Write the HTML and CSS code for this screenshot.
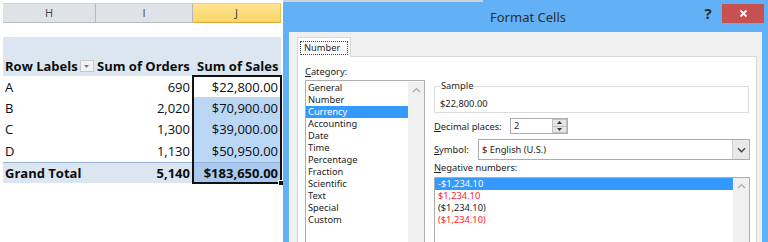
FILE: index.html
```html
<!DOCTYPE html>
<html>
<head>
<meta charset="utf-8">
<link rel="stylesheet" href="styles.css">
</head>
<body>
<div class="screen">
  <div class="sheet">
    <div class="colheads">
      <div class="ch">H</div>
      <div class="ch">I</div>
      <div class="ch ch-sel">J</div>
    </div>
    <div class="gap-row"></div>
    <div class="pivot">
      <div class="prow pblank"><div class="c"></div><div class="c"></div><div class="c"></div></div>
      <div class="prow phead">
        <div class="c lbl">Row Labels<span class="filter"><svg width="5" height="3" viewBox="0 0 5 3"><path d="M0 0H5L2.5 3Z" fill="#7a7a7a"/></svg></span></div>
        <div class="c hd">Sum of Orders</div>
        <div class="c hd hd-j">Sum of Sales</div>
      </div>
      <div class="prow pdata"><div class="c lbl">A</div><div class="c num">690</div><div class="c num">$22,800.00</div></div>
      <div class="prow pdata"><div class="c lbl">B</div><div class="c num">2,020</div><div class="c num selfill">$70,900.00</div></div>
      <div class="prow pdata"><div class="c lbl">C</div><div class="c num">1,300</div><div class="c num selfill">$39,000.00</div></div>
      <div class="prow pdata"><div class="c lbl">D</div><div class="c num">1,130</div><div class="c num selfill">$50,950.00</div></div>
      <div class="prow ptotal"><div class="c lbl">Grand Total</div><div class="c num">5,140</div><div class="c num selfill-total">$183,650.00</div></div>
      <div class="selbox"><span class="handle"></span></div>
    </div>
  </div>

  <div class="dialog">
    <div class="titlebar">
      <div class="title">Format Cells</div>
      <div class="help">?</div>
      <div class="close"><svg width="9" height="9" viewBox="0 0 9 9"><path d="M1.5 1.5L7.5 7.5M7.5 1.5L1.5 7.5" stroke="#fff" stroke-width="1.8"/></svg></div>
    </div>
    <div class="client">
      <div class="tabs"><div class="tab"><span class="focus">Number</span></div></div>
      <div class="panel">
        <div class="leftcol">
          <div class="flabel"><u>C</u>ategory:</div>
          <div class="listbox catlist">
            <div class="items">
              <div class="it">General</div>
              <div class="it">Number</div>
              <div class="it sel">Currency</div>
              <div class="it">Accounting</div>
              <div class="it">Date</div>
              <div class="it">Time</div>
              <div class="it">Percentage</div>
              <div class="it">Fraction</div>
              <div class="it">Scientific</div>
              <div class="it">Text</div>
              <div class="it">Special</div>
              <div class="it">Custom</div>
            </div>
            <div class="sbar"><svg width="9" height="6" viewBox="0 0 9 6"><path d="M1 5L4.5 1.5L8 5" fill="none" stroke="#a8a8a8" stroke-width="1.2"/></svg></div>
          </div>
        </div>
        <div class="rightcol">
          <fieldset class="sample">
            <legend>Sample</legend>
            <div class="sampleval">$22,800.00</div>
          </fieldset>
          <div class="frow decrow">
            <div class="rlabel dl"><u>D</u>ecimal places:</div>
            <div class="spin">
              <div class="spinval">2</div>
              <div class="spinbtns">
                <div class="sb"><svg width="5" height="3" viewBox="0 0 5 3"><path d="M0 3H5L2.5 0Z" fill="#333"/></svg></div>
                <div class="sb"><svg width="5" height="3" viewBox="0 0 5 3"><path d="M0 0H5L2.5 3Z" fill="#333"/></svg></div>
              </div>
            </div>
          </div>
          <div class="frow symrow">
            <div class="rlabel sl"><u>S</u>ymbol:</div>
            <div class="combo">
              <div class="comboval">$ English (U.S.)</div>
              <div class="combobtn"><svg width="9" height="6" viewBox="0 0 9 6"><path d="M1 1.2L4.5 4.7L8 1.2" fill="none" stroke="#444" stroke-width="1.4"/></svg></div>
            </div>
          </div>
          <div class="flabel neglabel"><u>N</u>egative numbers:</div>
          <div class="listbox neglist">
            <div class="items">
              <div class="it sel">-$1,234.10</div>
              <div class="it red">$1,234.10</div>
              <div class="it">($1,234.10)</div>
              <div class="it red">($1,234.10)</div>
            </div>
            <div class="sbar"><svg width="9" height="6" viewBox="0 0 9 6"><path d="M1 5L4.5 1.5L8 5" fill="none" stroke="#a8a8a8" stroke-width="1.2"/></svg></div>
          </div>
        </div>
      </div>
    </div>
  </div>
</div>
</body>
</html>
```
FILE: styles.css
```css
* { box-sizing: border-box; }
html, body { margin: 0; padding: 0; }
body { width: 768px; height: 242px; overflow: hidden; background: #fff; }

.screen { display: flex; height: 242px; overflow: hidden; }

/* ---------- spreadsheet ---------- */
.sheet {
  width: 283px;
  flex: none;
  padding: 3px 0 0 3px;
  font-family: "Open Sans", "Noto Sans", sans-serif;
  color: #0d0d0d;
}
.colheads {
  display: grid;
  grid-template-columns: 93px 97px 88px;
  height: 20px;
}
.ch {
  background: #dfe3e8;
  border-top: 1px solid #d0d4d9;
  border-bottom: 1px solid #b9bdc2;
  border-right: 1px solid #b4b8bd;
  font-size: 11px;
  line-height: 18px;
  text-align: center;
  color: #444;
}
.ch-sel {
  background: linear-gradient(#ffe38d, #f9d66a);
  border-bottom: 1px solid #e0a83a;
  border-right: 1px solid #e9c25a;
  color: #333;
}
.gap-row { height: 14px; }

.pivot { position: relative; width: 278px; }
.prow {
  display: grid;
  grid-template-columns: 93px 97px 88px;
  font-size: 13px;
}
.c {
  display: flex;
  align-items: center;
  white-space: nowrap;
}
.lbl { padding-left: 2px; }
.hd { padding-left: 1px; }
.hd-j { padding-left: 4px; }
.num { justify-content: flex-end; padding-right: 3px; }
.pblank { height: 19px; background: #dce6f1; }
.phead { height: 20px; background: #dce6f1; font-weight: 700; }
.pdata { height: 21.4px; }
.ptotal {
  height: 21.4px;
  background: #dce6f1;
  border-top: 1px solid #95b3d7;
  font-weight: 700;
}
.selfill { background: #bad7f6; }
.selfill-total { background: #a9c9ef; }

.filter {
  display: inline-flex;
  align-items: center;
  justify-content: center;
  width: 14px;
  height: 12px;
  margin-left: 2px;
  background: #f2f2f2;
  border: 1px solid #c8c8c8;
}

.selbox {
  position: absolute;
  left: 189px;
  top: 38px;
  width: 90px;
  height: 109px;
  border: 2px solid #111;
  pointer-events: none;
}
.handle {
  position: absolute;
  right: -4px;
  bottom: -4px;
  width: 6px;
  height: 6px;
  background: #111;
  border: 1px solid #fff;
}

/* ---------- dialog ---------- */
.dialog {
  width: 485px;
  flex: none;
  background: #62b1f6;
  padding: 0 6px;
  display: flex;
  flex-direction: column;
  font-family: "Noto Sans", "Open Sans", sans-serif;
  color: #1a1a1a;
  position: relative;
}
.dialog::before {
  content: "";
  position: absolute;
  left: 0;
  top: 0;
  width: 200px;
  height: 2px;
  background: #cfd3d8;
}
.titlebar {
  height: 32px;
  flex: none;
  display: flex;
  align-items: flex-start;
}
.title {
  flex: 1;
  text-align: center;
  padding-left: 66px;
  font-size: 13px;
  line-height: 34px;
  color: #2e2e2e;
}
.help {
  width: 14px;
  margin-right: 7px;
  font-size: 15px;
  font-weight: 700;
  line-height: 26px;
  color: #2a2a2a;
  text-align: center;
}
.close {
  width: 42px;
  height: 19px;
  margin-top: 4px;
  margin-right: -2px;
  background: #c75050;
  display: flex;
  align-items: center;
  justify-content: center;
}

.client {
  flex: 1;
  min-height: 0;
  background: #f0f0f0;
  padding: 5px 5px 0 8px;
  display: flex;
  flex-direction: column;
  font-size: 9.3px;
}
.tabs { display: flex; height: 20px; flex: none; position: relative; z-index: 1; }
.tab {
  width: 54px;
  height: 20px;
  background: #fff;
  border: 1px solid #d9d9d9;
  border-bottom: none;
  padding: 3px 2px 0 2px;
}
.focus {
  display: block;
  border: 1px dotted #444;
  line-height: 12px;
  padding: 0 0 0 3px;
}
.panel {
  flex: 1;
  min-height: 0;
  overflow: hidden;
  margin-top: -1px;
  background: #fff;
  border: 1px solid #d9d9d9;
  border-bottom: none;
  display: flex;
  gap: 9px;
  padding: 9px 6px 0 7px;
}
.leftcol { width: 120px; flex: none; }
.flabel { line-height: 12px; white-space: nowrap; }
.listbox {
  display: flex;
  border: 1px solid #abadb3;
  background: #fff;
}
.catlist { margin-top: 2px; height: 170px; padding-top: 1px; }
.items { flex: 1; }
.it { line-height: 12px; height: 12px; white-space: nowrap; padding-left: 2px; }
.it.sel { background: #3399ff; color: #fff; }
.it.red { color: #ff1a1a; }
.sbar {
  width: 16px;
  flex: none;
  background: #f0f0f0;
  display: flex;
  justify-content: center;
  align-items: flex-start;
  padding-top: 5px;
}

.rightcol { width: 316px; flex: none; display: flex; flex-direction: column; }
.sample {
  margin: 14px 0 0 0;
  width: 315px;
  padding: 6px 4px 2px 5px;
  border: 1px solid #dcdcdc;
}
.sample legend { padding: 0 1px; line-height: 12px; }
.sampleval { line-height: 12px; }

.frow { display: flex; align-items: center; }
.decrow { margin-top: 5px; height: 16px; }
.dl { width: 76px; }
.rlabel { white-space: nowrap; }
.spin {
  width: 58px;
  height: 16px;
  border: 1px solid #abadb3;
  display: flex;
  background: #fff;
}
.spinval { flex: 1; padding-left: 3px; line-height: 14px; }
.spinbtns { width: 15px; display: flex; flex-direction: column; }
.sb {
  flex: 1;
  background: #e6e6e6;
  border: 1px solid #c2c2c2;
  display: flex;
  align-items: center;
  justify-content: center;
}
.sb + .sb { border-top: none; }

.symrow { margin-top: 5px; height: 21px; }
.sl { width: 44px; }
.combo {
  width: 272px;
  height: 21px;
  border: 1px solid #acacac;
  background: #fff;
  display: flex;
}
.comboval { flex: 1; padding-left: 3px; line-height: 19px; }
.combobtn {
  width: 17px;
  background: #e8e8e8;
  border-left: 1px solid #d0d0d0;
  display: flex;
  align-items: center;
  justify-content: center;
}

.neglabel { margin-top: 2px; }
.neglist { margin-top: 3px; height: 80px; width: 316px; flex: none; }
.neglist .it { padding-left: 3px; }
```
